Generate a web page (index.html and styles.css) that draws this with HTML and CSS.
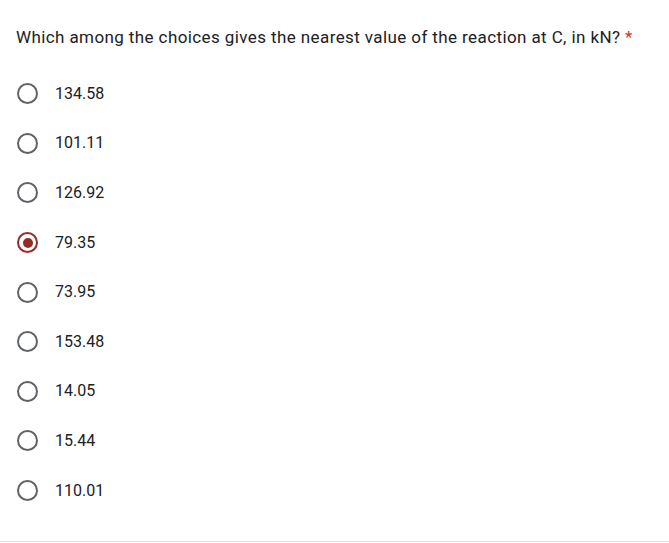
FILE: index.html
```html
<!DOCTYPE html>
<html>
<head>
<meta charset="utf-8">
<link rel="stylesheet" href="styles.css">
</head>
<body>
<div class="card">
  <div class="title">Which among the choices gives the nearest value of the reaction at C, in kN? <span class="req">*</span></div>
  <div class="options">
    <div class="opt"><span class="radio"></span><span class="label">134.58</span></div>
    <div class="opt"><span class="radio"></span><span class="label">101.11</span></div>
    <div class="opt"><span class="radio"></span><span class="label">126.92</span></div>
    <div class="opt"><span class="radio checked"></span><span class="label">79.35</span></div>
    <div class="opt"><span class="radio"></span><span class="label">73.95</span></div>
    <div class="opt"><span class="radio"></span><span class="label">153.48</span></div>
    <div class="opt"><span class="radio"></span><span class="label">14.05</span></div>
    <div class="opt"><span class="radio"></span><span class="label">15.44</span></div>
    <div class="opt"><span class="radio"></span><span class="label">110.01</span></div>
  </div>
</div>
</body>
</html>
```
FILE: styles.css
```css
html, body {
  margin: 0;
  padding: 0;
  background: #ffffff;
}
body {
  font-family: Roboto, "Liberation Sans", Arial, sans-serif;
  color: #202124;
}
.card {
  box-sizing: border-box;
  height: 542px;
  padding: 25px 16px 0 16px;
  border-bottom: 1px solid #e3dadd;
}
.title {
  font-size: 17px;
  line-height: 24px;
  letter-spacing: 0.4px;
}
.req {
  color: #d93025;
}
.options {
  margin-top: 20px;
  display: flex;
  flex-direction: column;
}
.opt {
  height: 49.6px;
  display: flex;
  align-items: center;
}
.radio {
  box-sizing: border-box;
  width: 21px;
  height: 21px;
  border: 2px solid #5f6368;
  border-radius: 50%;
  margin-left: 1px;
  display: flex;
  align-items: center;
  justify-content: center;
}
.radio.checked {
  border-color: #8f2e26;
}
.radio.checked::after {
  content: "";
  width: 10px;
  height: 10px;
  border-radius: 50%;
  background: #8f2e26;
}
.label {
  margin-left: 17px;
  font-size: 16px;
  line-height: 20px;
  letter-spacing: 0;
}
```
